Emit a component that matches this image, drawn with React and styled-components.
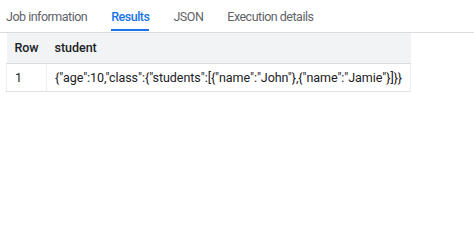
import React from "react";
import styled, { createGlobalStyle } from "styled-components";

const Global = createGlobalStyle`
  html, body { margin: 0; padding: 0; background: #fff; }
  body { font-family: Roboto, "Liberation Sans", Arial, sans-serif; }
`;

const Page = styled.div`
  width: 474px;
  height: 227px;
  background: #fff;
`;

const TabBar = styled.div`
  display: flex;
  height: 33px;
  padding-left: 6px;
  border-bottom: 1px solid #dadce0;
  box-sizing: border-box;
`;

const Tab = styled.div`
  position: relative;
  display: flex;
  align-items: center;
  margin-right: 24px;
  font-size: 12.5px;
  letter-spacing: -0.5px;
  font-weight: ${(p) => (p.$active ? 500 : 400)};
  color: ${(p) => (p.$active ? "#1a73e8" : "#5f6368")};
  &::after {
    content: "";
    display: ${(p) => (p.$active ? "block" : "none")};
    position: absolute;
    left: 0;
    right: 0;
    bottom: 1px;
    height: 2px;
    background: #1a73e8;
  }
`;

const TableWrap = styled.div`
  padding-left: 6px;
`;

const Table = styled.table`
  border-collapse: collapse;
  font-size: 12.5px;
  letter-spacing: -0.05px;
  color: #202124;
`;

const HeadCell = styled.th`
  background: #f1f3f4;
  text-align: left;
  font-weight: 500;
  height: 30px;
  padding: 0 8px;
  box-sizing: border-box;
  border-bottom: 1px solid #dadce0;
`;

const Cell = styled.td`
  height: 28px;
  padding: 0 8px;
  box-sizing: border-box;
  border-bottom: 1px solid #e0e0e0;
  border-left: ${(p) => (p.$first ? "1px solid #eceff1" : "none")};
  border-right: 1px solid #eceff1;
  white-space: nowrap;
`;

export default function App() {
  return (
    <Page>
      <Global />
      <TabBar>
        <Tab>Job information</Tab>
        <Tab $active>Results</Tab>
        <Tab>JSON</Tab>
        <Tab>Execution details</Tab>
      </TabBar>
      <TableWrap>
        <Table>
          <thead>
            <tr>
              <HeadCell style={{ width: 38 }}>Row</HeadCell>
              <HeadCell>student</HeadCell>
            </tr>
          </thead>
          <tbody>
            <tr>
              <Cell $first>1</Cell>
              <Cell>{'{"age":10,"class":{"students":[{"name":"John"},{"name":"Jamie"}]}}'}</Cell>
            </tr>
          </tbody>
        </Table>
      </TableWrap>
    </Page>
  );
}
